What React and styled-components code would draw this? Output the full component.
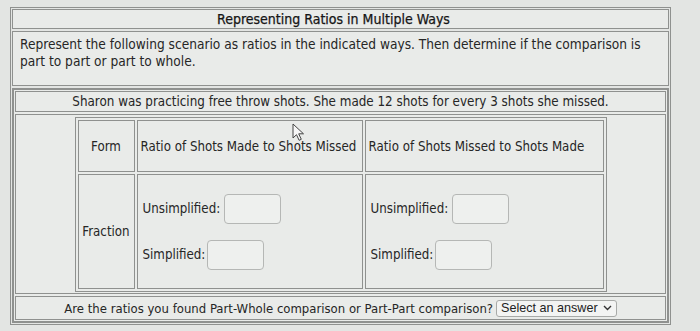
import React from 'react';
import styled, { createGlobalStyle } from 'styled-components';

const GlobalStyle = createGlobalStyle`
  html, body {
    margin: 0;
    padding: 0;
    background: #e3e5e3;
  }
  body {
    font-family: "DejaVu Sans Condensed", "Noto Sans", sans-serif;
    font-size: 13.3px;
    color: #262626;
  }
`;

const Page = styled.div`
  width: 700px;
  height: 331px;
  overflow: hidden;
  padding: 7px 0 0 10px;
  box-sizing: border-box;
  position: relative;
`;

const Frame = styled.div`
  width: 661px;
  box-sizing: border-box;
  border: 1px solid #8f918f;
  padding: 1px;
  display: flex;
  flex-direction: column;
  gap: 2px;
`;

const Cell = styled.div`
  box-sizing: border-box;
  border: 1px solid #8f918f;
  background: #e9ebe9;
  height: ${(p) => (p.$h ? `${p.$h}px` : 'auto')};
  padding: ${(p) => p.$pad || '0'};
  text-align: ${(p) => p.$align || 'left'};
  line-height: ${(p) => p.$lh || 17}px;
  font-size: ${(p) => p.$fs || 13.3}px;
`;

const Title = styled.div`
  font-size: 14px;
  color: #161616;
  padding-right: 14px;
  -webkit-text-stroke: 0.25px #161616;
`;

const Nested = styled.div`
  box-sizing: border-box;
  border: 1px solid #8f918f;
  padding: 1px;
  display: flex;
  flex-direction: column;
  gap: 2px;
`;

const Holder = styled.div`
  box-sizing: border-box;
  border: 1px solid #8f918f;
  height: 180px;
  padding-top: 2px;
  display: flex;
  justify-content: center;
  align-items: flex-start;
`;

const FormTable = styled.div`
  box-sizing: border-box;
  border: 1px solid #8f918f;
  padding: 2px;
  display: grid;
  grid-template-columns: 57px 226px 239px;
  grid-template-rows: 52px 115px;
  gap: 2px;
  font-size: 13.2px;
`;

const TCell = styled.div`
  box-sizing: border-box;
  border: 1px solid #8f918f;
  display: flex;
  flex-direction: column;
  justify-content: center;
  align-items: ${(p) => (p.$center ? 'center' : 'flex-start')};
  padding-left: ${(p) => (p.$center ? 0 : 3)}px;
  white-space: nowrap;
  gap: 16px;
`;

const Line = styled.div`
  display: flex;
  align-items: center;
  gap: ${(p) => p.$gap}px;
  padding-left: ${(p) => p.$indent || 0}px;
`;

const Box = styled.span`
  display: inline-block;
  width: 57px;
  height: 30px;
  box-sizing: border-box;
  border: 1px solid #b5b7b5;
  border-radius: 4px;
  background: #eef0ee;
`;

const Question = styled.div`
  display: flex;
  justify-content: center;
  align-items: center;
  height: 22px;
  gap: 3px;
  font-size: 13px;
`;

const Select = styled.span`
  display: inline-flex;
  align-items: center;
  gap: 5px;
  height: 17px;
  box-sizing: border-box;
  padding: 0 4px;
  border: 1px solid #a8aaa8;
  border-radius: 3px;
  background: #f3f4f3;
  font-family: "Liberation Sans", Arial, sans-serif;
  font-size: 12.6px;
  color: #222;
`;

const Pointer = styled.svg`
  position: absolute;
  left: 292px;
  top: 123px;
`;

export default function App() {
  return (
    <>
      <GlobalStyle />
      <Page>
        <Frame>
          <Cell $h={20} $align="center" $lh={19}>
            <Title>Representing Ratios in Multiple Ways</Title>
          </Cell>
          <Cell $h={55} $pad="4px 4px 4px 7px" $fs={13.6}>
            Represent the following scenario as ratios in the indicated ways. Then determine if the comparison is
            part to part or part to whole.
          </Cell>
          <Cell>
            <Nested>
              <Cell $h={21} $align="center" $lh={19} $fs={13.3}>
                Sharon was practicing free throw shots. She made 12 shots for every 3 shots she missed.
              </Cell>
              <Holder>
                <FormTable>
                  <TCell $center>Form</TCell>
                  <TCell>Ratio of Shots Made to Shots Missed</TCell>
                  <TCell>Ratio of Shots Missed to Shots Made</TCell>
                  <TCell $center>Fraction</TCell>
                  <TCell>
                    <Line $gap={4} $indent={2}>Unsimplified: <Box /></Line>
                    <Line $gap={2} $indent={2}>Simplified:<Box /></Line>
                  </TCell>
                  <TCell>
                    <Line $gap={4} $indent={2}>Unsimplified: <Box /></Line>
                    <Line $gap={2} $indent={2}>Simplified:<Box /></Line>
                  </TCell>
                </FormTable>
              </Holder>
              <Cell $h={24}>
                <Question>
                  Are the ratios you found Part-Whole comparison or Part-Part comparison?
                  <Select>
                    Select an answer
                    <svg width="9" height="6" viewBox="0 0 9 6">
                      <path d="M1 1l3.5 3.5L8 1" fill="none" stroke="#333" strokeWidth="1.4" />
                    </svg>
                  </Select>
                </Question>
              </Cell>
            </Nested>
          </Cell>
        </Frame>
        <Pointer width="13" height="18" viewBox="0 0 13 18">
          <path d="M1 1v14l3.5-3.3 2.6 5.6 2.2-1-2.6-5.5H11.5z" fill="#f7f7f7" stroke="#444" strokeWidth="1" />
        </Pointer>
      </Page>
    </>
  );
}
